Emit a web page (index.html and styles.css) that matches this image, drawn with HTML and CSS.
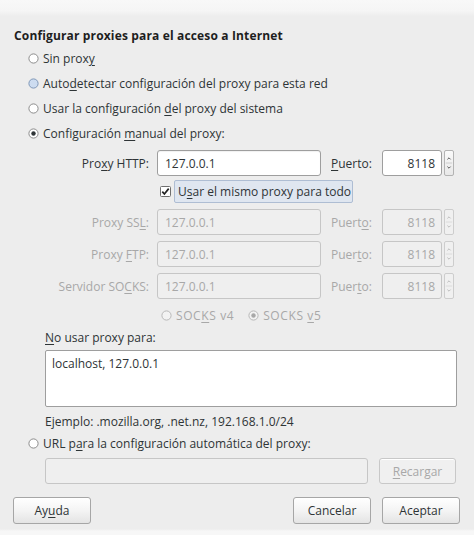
FILE: index.html
```html
<!DOCTYPE html>
<html lang="es">
<head>
<meta charset="utf-8">
<title>Configuración de conexión</title>
<link rel="stylesheet" href="styles.css">
</head>
<body>
<div class="dialog">
  <div class="title">Configurar proxies para el acceso a Internet</div>

  <div class="radio-row">
    <svg class="radio" viewBox="0 0 11 11"><circle cx="5.5" cy="5.5" r="4.6" fill="#fff" stroke="#8c8c8c"/></svg>
    <span>Sin prox<u>y</u></span>
  </div>
  <div class="radio-row">
    <svg class="radio" viewBox="0 0 11 11"><circle cx="5.5" cy="5.5" r="4.6" fill="#cddcf0" stroke="#7f97b8"/></svg>
    <span>Auto<u>d</u>etectar configuración del proxy para esta red</span>
  </div>
  <div class="radio-row">
    <svg class="radio" viewBox="0 0 11 11"><circle cx="5.5" cy="5.5" r="4.6" fill="#fff" stroke="#8c8c8c"/></svg>
    <span>Usar la configuración <u>d</u>el proxy del sistema</span>
  </div>
  <div class="radio-row">
    <svg class="radio" viewBox="0 0 11 11"><circle cx="5.5" cy="5.5" r="4.6" fill="#fff" stroke="#8c8c8c"/><circle cx="5.5" cy="5.5" r="2.2" fill="#2e3436"/></svg>
    <span>Configuración <u>m</u>anual del proxy:</span>
  </div>

  <div class="field-row first">
    <span class="field-label">Pro<u>x</u>y HTTP:</span>
    <div class="entry">127.0.0.1</div>
    <span class="port-label"><u>P</u>uerto:</span>
    <div class="spin">
      <div class="spin-entry">8118</div>
      <div class="spin-arrows">
        <svg viewBox="0 0 10 26"><path d="M3 8.5 L5 6.5 L7 8.5 M3 17.5 L5 19.5 L7 17.5" fill="none" stroke="#444" stroke-width="1.1"/><path d="M1 13 H9" stroke="#c4c4c4" stroke-width="1"/></svg>
      </div>
    </div>
  </div>

  <div class="check-row">
    <svg class="check" viewBox="0 0 11 11"><rect x="0.5" y="0.5" width="10" height="10" rx="1" fill="#fff" stroke="#6f6f6f"/><path d="M2.3 5.6 L4.4 8 L8.7 2.6" fill="none" stroke="#222" stroke-width="1.7"/></svg>
    <span class="check-label">U<u>s</u>ar el mismo proxy para todo</span>
  </div>

  <div class="field-row disabled">
    <span class="field-label">Proxy SS<u>L</u>:</span>
    <div class="entry">127.0.0.1</div>
    <span class="port-label">Puert<u>o</u>:</span>
    <div class="spin">
      <div class="spin-entry">8118</div>
      <div class="spin-arrows">
        <svg viewBox="0 0 10 26"><path d="M3 8.5 L5 6.5 L7 8.5 M3 17.5 L5 19.5 L7 17.5" fill="none" stroke="#b5b5b5" stroke-width="1.1"/><path d="M1 13 H9" stroke="#d6d6d6" stroke-width="1"/></svg>
      </div>
    </div>
  </div>

  <div class="field-row disabled">
    <span class="field-label">Proxy <u>F</u>TP:</span>
    <div class="entry">127.0.0.1</div>
    <span class="port-label">Puer<u>t</u>o:</span>
    <div class="spin">
      <div class="spin-entry">8118</div>
      <div class="spin-arrows">
        <svg viewBox="0 0 10 26"><path d="M3 8.5 L5 6.5 L7 8.5 M3 17.5 L5 19.5 L7 17.5" fill="none" stroke="#b5b5b5" stroke-width="1.1"/><path d="M1 13 H9" stroke="#d6d6d6" stroke-width="1"/></svg>
      </div>
    </div>
  </div>

  <div class="field-row disabled">
    <span class="field-label">Servidor SO<u>C</u>KS:</span>
    <div class="entry">127.0.0.1</div>
    <span class="port-label">Puer<u>t</u>o:</span>
    <div class="spin">
      <div class="spin-entry">8118</div>
      <div class="spin-arrows">
        <svg viewBox="0 0 10 26"><path d="M3 8.5 L5 6.5 L7 8.5 M3 17.5 L5 19.5 L7 17.5" fill="none" stroke="#b5b5b5" stroke-width="1.1"/><path d="M1 13 H9" stroke="#d6d6d6" stroke-width="1"/></svg>
      </div>
    </div>
  </div>

  <div class="socks-row disabled">
    <svg class="radio" viewBox="0 0 11 11"><circle cx="5.5" cy="5.5" r="4.6" fill="#f2f2f2" stroke="#b8b8b8"/></svg>
    <span class="socks-text">SOC<u>K</u>S v4</span>
    <svg class="radio v5" viewBox="0 0 11 11"><circle cx="5.5" cy="5.5" r="4.6" fill="#f2f2f2" stroke="#b8b8b8"/><circle cx="5.5" cy="5.5" r="2.2" fill="#a8a8a8"/></svg>
    <span class="socks-text">SOCKS <u>v</u>5</span>
  </div>

  <div class="noproxy-label"><u>N</u>o usar proxy para:</div>
  <div class="textarea">localhost, 127.0.0.1</div>
  <div class="example">Ejemplo: .mozilla.org, .net.nz, 192.168.1.0/24</div>

  <div class="radio-row url-row">
    <svg class="radio" viewBox="0 0 11 11"><circle cx="5.5" cy="5.5" r="4.6" fill="#fff" stroke="#8c8c8c"/></svg>
    <span>URL p<u>a</u>ra la configuración automática del proxy:</span>
  </div>

  <div class="url-line">
    <div class="url-entry"></div>
    <div class="button reload"><u>R</u>ecargar</div>
  </div>

  <div class="buttons">
    <div class="button help">Ay<u>u</u>da</div>
    <div class="spacer"></div>
    <div class="button">Cancelar</div>
    <div class="button">Aceptar</div>
  </div>
</div>
</body>
</html>
```

FILE: styles.css
```css
html, body {
  margin: 0;
  padding: 0;
}

body {
  width: 474px;
  height: 535px;
  overflow: hidden;
  background: linear-gradient(to bottom, #f8f8f8 0, #f5f5f5 11px, #ededed 16px, #ededed 529px, #f7f7f7 531px);
  font-family: "Open Sans", "DejaVu Sans", sans-serif;
  font-size: 12px;
  color: #2e3436;
}

u {
  text-decoration-thickness: 1px;
  text-underline-offset: 2px;
}

.dialog {
  padding: 26px 0 0 14px;
}

.title {
  height: 20px;
  line-height: 20px;
  font-weight: bold;
  letter-spacing: 0.15px;
  color: #1e1e1e;
}

.radio-row {
  height: 25px;
  display: flex;
  align-items: center;
  gap: 4px;
  margin-left: 14px;
  white-space: nowrap;
}

.radio {
  width: 11px;
  height: 11px;
  flex: none;
}

.field-row {
  display: flex;
  align-items: center;
  height: 26px;
  margin-top: 6px;
  white-space: nowrap;
}

.field-row.first {
  margin-top: 4px;
}

.field-label {
  width: 135px;
  text-align: right;
  margin-right: 8px;
}

.entry {
  width: 164px;
  height: 26px;
  box-sizing: border-box;
  border: 1px solid #9e9e9e;
  border-radius: 3px;
  background: #fff;
  padding: 0 7px;
  display: flex;
  align-items: center;
  box-shadow: inset 0 1px 1px rgba(0, 0, 0, 0.06);
}

.port-label {
  width: 41px;
  margin-left: 10px;
  margin-right: 10px;
}

.spin {
  display: flex;
  gap: 2px;
}

.spin-entry {
  width: 60px;
  height: 26px;
  box-sizing: border-box;
  border: 1px solid #9e9e9e;
  border-radius: 3px;
  background: #fff;
  padding: 0 6px;
  display: flex;
  align-items: center;
  justify-content: flex-end;
}

.spin-arrows {
  width: 10px;
  height: 26px;
  box-sizing: border-box;
  border: 1px solid #b3b3b3;
  border-radius: 2px;
  background: linear-gradient(#fafafa, #e8e8e8);
  overflow: hidden;
}

.spin-arrows svg {
  display: block;
  width: 8px;
  height: 24px;
}

.disabled {
  color: #a8a8a8;
}

.disabled .entry,
.disabled .spin-entry {
  background: #efefef;
  border-color: #c6c6c6;
  box-shadow: none;
}

.disabled .spin-arrows {
  border-color: #cdcdcd;
  background: #f0f0f0;
}

.check-row {
  display: flex;
  align-items: center;
  height: 23px;
  margin-top: 4px;
  margin-left: 146px;
  gap: 3px;
}

.check {
  width: 11px;
  height: 11px;
  flex: none;
}

.check-label {
  height: 23px;
  box-sizing: border-box;
  line-height: 21px;
  padding: 0 1px 0 3px;
  background: #dfe6f0;
  border: 1px solid #aebdd3;
  border-radius: 2px;
  color: #2e3436;
}

.check-row + .field-row {
  margin-top: 6px;
}

.socks-row {
  display: flex;
  align-items: center;
  height: 20px;
  margin-top: 6px;
  margin-left: 147px;
  white-space: nowrap;
}

.socks-text {
  margin-left: 4px;
  letter-spacing: 0.6px;
}

.radio.v5 {
  margin-left: 14px;
}

.noproxy-label {
  height: 18px;
  line-height: 18px;
  margin-top: 4px;
  margin-left: 31px;
}

.textarea {
  width: 412px;
  height: 57px;
  box-sizing: border-box;
  margin-top: 3px;
  margin-left: 31px;
  border: 1px solid #9e9e9e;
  border-radius: 2px;
  background: #fff;
  padding: 5px 6px;
  line-height: 16px;
}

.example {
  height: 18px;
  line-height: 18px;
  margin-top: 6px;
  margin-left: 31px;
}

.url-row {
  height: 18px;
  margin-top: 3px;
}

.url-line {
  display: flex;
  gap: 11px;
  margin-top: 6px;
  margin-left: 31px;
}

.url-entry {
  width: 323px;
  height: 26px;
  box-sizing: border-box;
  border: 1px solid #c6c6c6;
  border-radius: 3px;
  background: #efefef;
}

.button {
  width: 78px;
  height: 27px;
  box-sizing: border-box;
  border: 1px solid #a6a6a6;
  border-radius: 3px;
  background: linear-gradient(#ffffff, #f4f4f4 50%, #e4e4e4);
  display: flex;
  align-items: center;
  justify-content: center;
  box-shadow: inset 0 1px 0 #fff;
}

.button.reload {
  width: 77px;
  height: 26px;
  color: #a8a8a8;
  border-color: #c8c8c8;
  background: #f0f0f0;
}

.buttons {
  display: flex;
  gap: 11px;
  margin-top: 13px;
  width: 447px;
  margin-left: -1px;
}

.spacer {
  flex: 1;
}
```
